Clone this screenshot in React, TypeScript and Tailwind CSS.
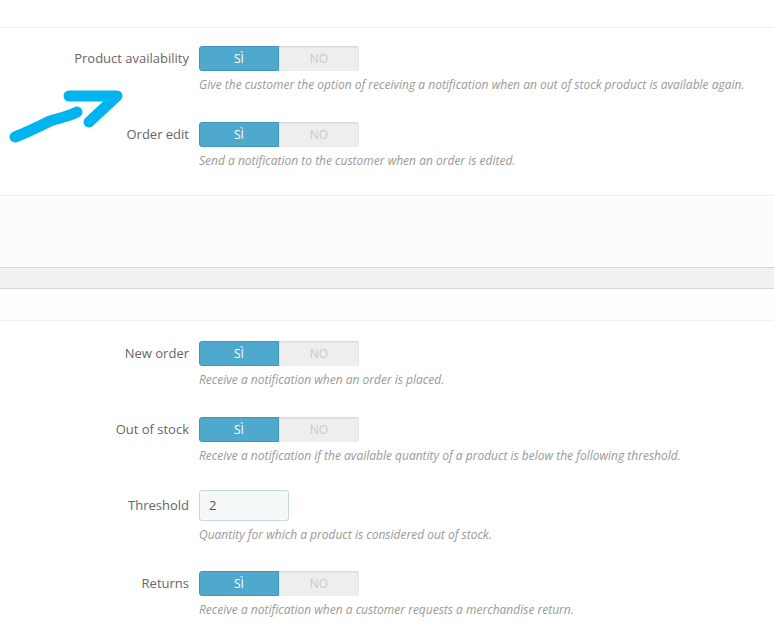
import React from "react";

const font = { fontFamily: '"Open Sans", "Noto Sans", sans-serif' };

function Switch() {
  return (
    <div className="flex h-[25px] w-[160px] rounded-[3px] text-[12px]">
      <div className="flex w-[80px] items-center justify-center rounded-l-[3px] border border-[#3f97bd] bg-[#4ea9cc] text-white">
        SÌ
      </div>
      <div className="flex w-[80px] items-center justify-center rounded-r-[3px] bg-[#eeeeee] text-[#c8c8c8] shadow-[inset_0_1px_2px_rgba(0,0,0,0.12)]">
        NO
      </div>
    </div>
  );
}

function Help({ children }: { children: React.ReactNode }) {
  return (
    <div className="mt-[5px] whitespace-nowrap text-[12px] leading-[18px] italic text-[#999]">
      {children}
    </div>
  );
}

function Group({
  label,
  help,
  control,
  mb = "mb-[28px]",
}: {
  label: string;
  help: string;
  control: React.ReactNode;
  mb?: string;
}) {
  return (
    <div className={mb}>
      <div className="flex items-center">
        <div className="w-[199px] pr-[10px] pt-[1px] text-right text-[13px] text-[#666]">{label}</div>
        {control}
      </div>
      <div className="pl-[199px]">
        <Help>{help}</Help>
      </div>
    </div>
  );
}

function Threshold() {
  return (
    <div className="flex h-[31px] w-[90px] items-center rounded-[3px] border border-[#c7d6db] bg-[#f5f8f9] pl-[9px] text-[13px] text-[#555]">
      2
    </div>
  );
}

export default function App() {
  return (
    <div className="relative w-[774px] h-[641px] overflow-hidden bg-white" style={font}>
      <div className="h-[28px] border-b border-[#eeeeee]" />
      <div className="pt-[18px] pb-[25px] border-b border-[#eeeeee]">
        <Group
          label="Product availability"
          help="Give the customer the option of receiving a notification when an out of stock product is available again."
          control={<Switch />}
        />
        <Group
          label="Order edit"
          help="Send a notification to the customer when an order is edited."
          control={<Switch />}
          mb=""
        />
      </div>
      <div className="h-[72px] bg-[#fbfcfd] border-b border-[#d3d5d8]" />
      <div className="h-[21px] bg-[#f0f1f3] border-b border-[#d3d5d8]" />
      <div className="h-[32px] bg-[#fefefe] border-b border-[#eeeeee]" />
      <div className="pt-[20px]">
        <Group label="New order" help="Receive a notification when an order is placed." control={<Switch />} />
        <Group
          label="Out of stock"
          help="Receive a notification if the available quantity of a product is below the following threshold."
          control={<Switch />}
          mb="mb-[25px]"
        />
        <Group
          label="Threshold"
          help="Quantity for which a product is considered out of stock."
          control={<Threshold />}
          mb="mb-[27px]"
        />
        <Group
          label="Returns"
          help="Receive a notification when a customer requests a merchandise return."
          control={<Switch />}
          mb=""
        />
      </div>
      <svg className="absolute left-0 top-0" width="140" height="150" viewBox="0 0 140 150">
        <path
          d="M15 137 C 28 132, 40 126, 50 121 C 60 118, 70 116, 77 112"
          fill="none"
          stroke="#00b4f0"
          strokeWidth="11"
          strokeLinecap="round"
          strokeLinejoin="round"
        />
        <path
          d="M69 96 L 117 96 L 89 122"
          fill="none"
          stroke="#00b4f0"
          strokeWidth="11"
          strokeLinecap="round"
          strokeLinejoin="round"
        />
      </svg>
    </div>
  );
}
